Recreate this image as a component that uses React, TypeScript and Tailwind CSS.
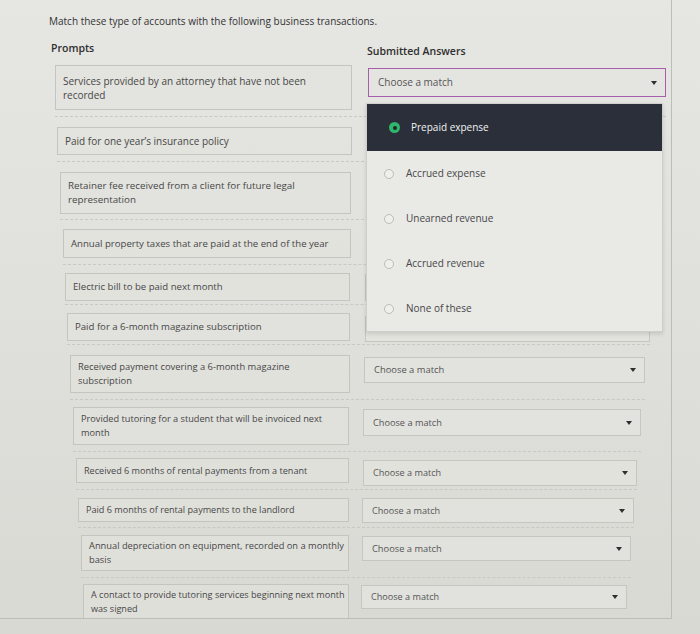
import React from "react";

type Row = {
  lines: string[];
  wrap: string;
  box: string;
  sel: string;
};

// per-row offsets/sizes follow the slight perspective of the screen
const rows: Row[] = [
  {
    lines: ["Services provided by an attorney that have not been", "recorded"],
    wrap: "ml-[55px] w-[611px] pt-[10px] pb-[6px] text-[10px]",
    box: "w-[297px] h-[45px]",
    sel: "ml-[16px] w-[298px] h-[29px] mt-[3px] border-[1.5px] border-[#a65dab]",
  },
  {
    lines: ["Paid for one year’s insurance policy"],
    wrap: "ml-[57px] w-[606px] pt-[10px] pb-[6px] text-[10px]",
    box: "w-[295px] h-[28px]",
    sel: "ml-[15px] w-[296px] h-[27px] mt-[1px] border border-[#c6c6c1]",
  },
  {
    lines: ["Retainer fee received from a client for future legal", "representation"],
    wrap: "ml-[60px] w-[600px] pt-[10px] pb-[5px] text-[9.8px]",
    box: "w-[291px] h-[42px]",
    sel: "ml-[15px] w-[294px] h-[27px] mt-[2px] border border-[#c6c6c1]",
  },
  {
    lines: ["Annual property taxes that are paid at the end of the year"],
    wrap: "ml-[63px] w-[594px] pt-[9px] pb-[6px] text-[9.6px]",
    box: "w-[288px] h-[29px]",
    sel: "ml-[15px] w-[291px] h-[27px] mt-[1px] border border-[#c6c6c1]",
  },
  {
    lines: ["Electric bill to be paid next month"],
    wrap: "ml-[65px] w-[589px] pt-[8px] pb-[3px] text-[9.6px]",
    box: "w-[285px] h-[28px]",
    sel: "ml-[15px] w-[289px] h-[27px] mt-[1px] border border-[#c6c6c1]",
  },
  {
    lines: ["Paid for a 6-month magazine subscription"],
    wrap: "ml-[67px] w-[583px] pt-[8px] pb-[2px] text-[9.6px]",
    box: "w-[283px] h-[28px]",
    sel: "ml-[15px] w-[285px] h-[26px] mt-[3px] border border-[#c6c6c1]",
  },
  {
    lines: ["Received payment covering a 6-month magazine", "subscription"],
    wrap: "ml-[70px] w-[575px] pt-[10px] pb-[6px] text-[9.4px]",
    box: "w-[280px] h-[38px]",
    sel: "ml-[14px] w-[281px] h-[26px] mt-[2px] border border-[#c6c6c1]",
  },
  {
    lines: ["Provided tutoring for a student that will be invoiced next", "month"],
    wrap: "ml-[73px] w-[568px] pt-[7px] pb-[6px] text-[9.2px]",
    box: "w-[276px] h-[38px]",
    sel: "ml-[14px] w-[278px] h-[27px] mt-[2px] border border-[#c6c6c1]",
  },
  {
    lines: ["Received 6 months of rental payments from a tenant"],
    wrap: "ml-[76px] w-[561px] pt-[6px] pb-[3px] text-[9.1px]",
    box: "w-[273px] h-[25px]",
    sel: "ml-[14px] w-[274px] h-[26px] mt-[2px] border border-[#c6c6c1]",
  },
  {
    lines: ["Paid 6 months of rental payments to the landlord"],
    wrap: "ml-[78px] w-[556px] pt-[8px] pb-[4px] text-[9.1px]",
    box: "w-[271px] h-[24px]",
    sel: "ml-[13px] w-[272px] h-[25px] mt-[0px] border border-[#c6c6c1]",
  },
  {
    lines: ["Annual depreciation on equipment, recorded on a monthly", "basis"],
    wrap: "ml-[81px] w-[550px] pt-[7px] pb-[6px] text-[9.3px]",
    box: "w-[268px] h-[36px]",
    sel: "ml-[13px] w-[269px] h-[25px] mt-[1px] border border-[#c6c6c1]",
  },
  {
    lines: ["A contact to provide tutoring services beginning next month", "was signed"],
    wrap: "ml-[83px] w-[544px] pt-[6px] pb-[6px] text-[9.1px]",
    box: "w-[266px] h-[36px]",
    sel: "ml-[12px] w-[266px] h-[24px] mt-[1px] border border-[#c6c6c1]",
  },
];

const options = ["Prepaid expense", "Accrued expense", "Unearned revenue", "Accrued revenue", "None of these"];

function Chevron() {
  return (
    <svg width="6" height="4" viewBox="0 0 6 4" className="shrink-0">
      <path d="M0 0H6L3 4Z" fill="#2f2f2f" />
    </svg>
  );
}

/* ── One prompt / answer pair ───────────────────────────────── */

function MatchRow({ row }: { row: Row }) {
  return (
    <div className={`flex items-start border-b border-dashed border-[#c9c9c3] ${row.wrap}`}>
      <div
        className={`flex flex-col justify-center px-[7px] border border-[#c5c5bf] bg-[#e2e2de]/60 leading-[14px] text-[#474747] ${row.box}`}
      >
        {row.lines.map((l) => (
          <span key={l} className="whitespace-nowrap">
            {l}
          </span>
        ))}
      </div>
      <div
        className={`flex items-center justify-between pl-[9px] pr-[8px] bg-[#e4e4e0]/70 text-[#555] ${row.sel}`}
      >
        <span>Choose a match</span>
        <Chevron />
      </div>
    </div>
  );
}

export default function App() {
  return (
    <div className="w-[700px] h-[634px] overflow-hidden bg-gradient-to-b from-[#e6e6e3] to-[#d9d9d4] font-['Open_Sans',_'Liberation_Sans',_sans-serif]">
      <div className="relative h-[619px] w-[672px] overflow-hidden border-r border-b border-[#bdbdb7] pt-[14px]">
        <p className="ml-[49px] text-[10px] leading-[14px] text-[#333]">
          Match these type of accounts with the following business transactions.
        </p>

        {/* ── Column headings ── */}
        <div className="mt-[13px] h-[14px] flex items-start text-[10.5px] leading-[14px] font-semibold text-[#2e2e2e]">
          <span className="ml-[51px] w-[316px]">Prompts</span>
          <span className="translate-y-[3px]">Submitted Answers</span>
        </div>

        <div className="flex flex-col">
          {rows.map((r) => (
            <MatchRow key={r.lines[0]} row={r} />
          ))}
        </div>

        {/* ── Open dropdown menu ── */}
        <div className="absolute top-[103px] left-[366px] w-[297px] flex flex-col border border-[#cfcfca] bg-[#e9e9e6] shadow-[0_2px_4px_rgba(0,0,0,0.12)] text-[10px]">
          {options.map((o, i) =>
            i === 0 ? (
              <div key={o} className="h-[47px] flex items-center gap-[11px] pl-[22px] bg-[#2a2f3a] text-[#f2f2f2]">
                <span className="w-[11px] h-[11px] rounded-full bg-[#2fb56d] flex items-center justify-center">
                  <span className="w-[4px] h-[4px] rounded-full bg-[#1f2a25]" />
                </span>
                {o}
              </div>
            ) : (
              <div key={o} className="h-[45px] flex items-center gap-[12px] pl-[17px] text-[#474747]">
                <span className="w-[10px] h-[10px] rounded-full border border-[#bdbdb8] bg-[#efefec]" />
                {o}
              </div>
            )
          )}
        </div>
      </div>
    </div>
  );
}
